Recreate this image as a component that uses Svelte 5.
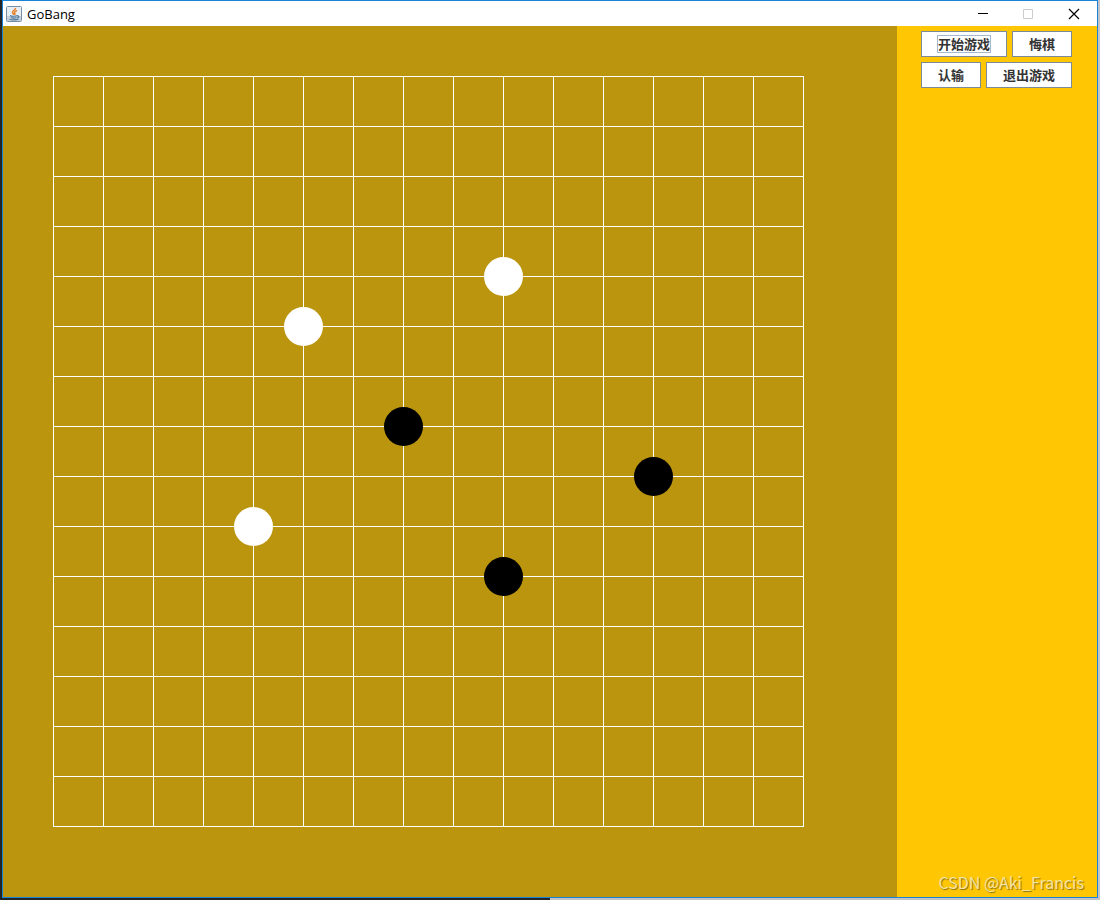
<script lang="ts">
	const size = 15;
	const cell = 50;
	const boardSize = size * cell + 1;
	const lines = Array.from({ length: size + 1 }, (_, i) => i * cell);

	// col / row are grid intersections, counted from the top left corner
	let stones = $state([
		{ col: 9, row: 4, color: 'white' },
		{ col: 5, row: 5, color: 'white' },
		{ col: 7, row: 7, color: 'black' },
		{ col: 12, row: 8, color: 'black' },
		{ col: 4, row: 9, color: 'white' },
		{ col: 9, row: 10, color: 'black' }
	]);

	function undo() {
		stones.pop();
	}

	function restart() {
		stones = [];
	}
</script>

<div class="desktop">
	<main class="window">
		<header class="titlebar">
			<svg class="logo" viewBox="0 0 16 16" aria-hidden="true">
				<rect x="0.5" y="0.5" width="15" height="15" rx="1" fill="#e6edf3" stroke="#7890a5" />
				<path d="M1 10h14v5H1z" fill="#c3d0dc" />
				<path d="M9.5 2C10 4 6 4.5 6.5 6.5c.2 1 1.5 1.5 1.5 2.5M11 4.5c-2 .8-3 1.5-2.3 2.5.6.8.5 1.3-.2 2" fill="none" stroke="#e8802c" stroke-width="1.5" />
				<path d="M4 9.5c1.5 1 5.5 1 7.5 0M11 10c2.5-.8 2.5 1.5.2 2M5 11.5c1.5.7 4 .7 5.5 0M3.5 13.2c2.5 1 7 .9 9-.2" fill="none" stroke="#517b9d" stroke-width="1.1" />
			</svg>
			<h1>GoBang</h1>
			<div class="controls">
				<button aria-label="Minimize">
					<svg viewBox="0 0 10 10"><path d="M1 4.5h10" stroke="#000" /></svg>
				</button>
				<button aria-label="Maximize" disabled>
					<svg viewBox="0 0 10 10"><path d="M.5.5h9v9h-9z" fill="none" stroke="#ccc" /></svg>
				</button>
				<button aria-label="Close">
					<svg viewBox="0 0 10 10"><path d="M0 0l10 10M10 0L0 10" stroke="#000" stroke-width="1.2" /></svg>
				</button>
			</div>
		</header>

		<div class="content">
			<section class="board">
				<svg width={boardSize} height={boardSize} role="img" aria-label="GoBang">
					{#each lines as pos}
						<rect class="line" x="0" y={pos} width={boardSize} height="1" />
						<rect class="line" x={pos} y="0" width="1" height={boardSize} />
					{/each}
					{#each stones as stone}
						<circle cx={stone.col * cell + 0.5} cy={stone.row * cell + 0.5} r="19.5" fill={stone.color} />
					{/each}
				</svg>
			</section>

			<aside class="sidebar">
				<div class="actions">
					<button class="focused" onclick={restart}><span>开始游戏</span></button>
					<button onclick={undo}><span>悔棋</span></button>
					<button><span>认输</span></button>
					<button><span>退出游戏</span></button>
				</div>
				<p class="watermark">CSDN @Aki_Francis</p>
			</aside>
		</div>
	</main>
</div>

<style>
	.desktop {
		box-sizing: border-box;
		min-height: 100vh;
		display: flex;
		padding: 0 2px 2px;
		background: linear-gradient(90deg, #242424 50%, #c4c4c8 50%);
	}
	.window {
		flex: 1;
		display: flex;
		flex-direction: column;
		border: 1px solid #1883d7;
	}
	.titlebar {
		display: flex;
		align-items: center;
		height: 25px;
		padding-left: 3px;
		gap: 5px;
		background: #fff;
	}
	.logo {
		width: 16px;
		height: 16px;
	}
	h1 {
		flex: 1;
		margin: 0;
		font: 13px/16px 'Open Sans', 'Noto Sans', sans-serif;
		color: #000;
	}
	.controls {
		display: flex;
	}
	.controls button {
		display: flex;
		align-items: center;
		justify-content: center;
		width: 46px;
		height: 25px;
		padding: 0;
		border: 0;
		background: none;
	}
	.controls svg {
		width: 10px;
		height: 10px;
		overflow: visible;
	}
	.content {
		flex: 1;
		display: flex;
	}
	.board {
		flex: 1;
		padding: 50px;
		background: #ba950d;
	}
	.board svg {
		display: block;
		overflow: visible;
	}
	.line {
		fill: #fff;
	}
	.sidebar {
		box-sizing: border-box;
		width: 200px;
		display: flex;
		flex-direction: column;
		justify-content: space-between;
		background: #ffc703;
	}
	.actions {
		display: flex;
		flex-wrap: wrap;
		gap: 5px;
		padding: 5px 24px;
	}
	.actions button {
		height: 26px;
		padding: 0 15px;
		border: 1px solid #7a8a99;
		background: #fff;
		color: #333;
		font: bold 13px/16px 'Noto Sans CJK SC', sans-serif;
	}
	.actions span {
		display: block;
		border: 1px solid transparent;
	}
	.actions .focused span {
		border-color: #a3b8cc;
	}
	.watermark {
		margin: 0;
		padding: 0 13px 5px;
		text-align: right;
		font: 16px/20px 'Noto Sans CJK SC', sans-serif;
		color: #f3e3a0;
		text-shadow: 1px 1px 1px #8a6d10;
	}
</style>
